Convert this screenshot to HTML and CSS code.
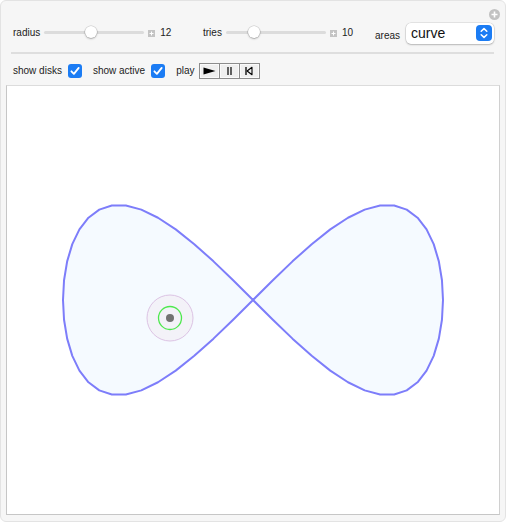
FILE: index.html
```html
<!DOCTYPE html>
<html lang="en">
<head>
<meta charset="utf-8">
<title>Curve areas</title>
<link rel="stylesheet" href="styles.css">
</head>
<body>
<div class="panel">
  <button class="add-btn" aria-label="more">
    <svg width="11" height="11" viewBox="0 0 11 11"><circle cx="5.5" cy="5.5" r="5.5" fill="#c2c2c2"/><path d="M5.5 2.5v6M2.5 5.5h6" stroke="#fff" stroke-width="1.6"/></svg>
  </button>

  <div class="row row-top">
    <div class="group g-radius">
      <span class="label">radius</span>
      <div class="slider"><div class="track"></div><div class="thumb" style="left:41px"></div></div>
      <span class="step"><svg width="7" height="7" viewBox="0 0 7 7"><rect width="7" height="7" fill="#c4c4c4"/><path d="M3.5 1.5v4M1.5 3.5h4" stroke="#fff" stroke-width="1"/></svg></span>
      <span class="value">12</span>
    </div>
    <div class="group g-tries">
      <span class="label">tries</span>
      <div class="slider"><div class="track"></div><div class="thumb" style="left:22px"></div></div>
      <span class="step"><svg width="7" height="7" viewBox="0 0 7 7"><rect width="7" height="7" fill="#c4c4c4"/><path d="M3.5 1.5v4M1.5 3.5h4" stroke="#fff" stroke-width="1"/></svg></span>
      <span class="value">10</span>
    </div>
    <div class="group g-areas">
      <span class="label label-low">areas</span>
      <div class="select">
        <span class="select-text">curve</span>
        <span class="stepper"><svg width="16" height="16" viewBox="0 0 16 16"><path d="M5.2 6.3L8 3.6l2.8 2.7M5.2 9.7L8 12.4l2.8-2.7" fill="none" stroke="#fff" stroke-width="1.5" stroke-linecap="round" stroke-linejoin="round"/></svg></span>
      </div>
    </div>
  </div>

  <div class="sep"></div>

  <div class="row row-bottom">
    <span class="label">show disks</span>
    <span class="check"><svg width="14" height="14" viewBox="0 0 14 14"><path d="M3.4 7.3l2.5 2.6 4.8-6" fill="none" stroke="#fff" stroke-width="1.8" stroke-linecap="round" stroke-linejoin="round"/></svg></span>
    <span class="label gap-l">show active</span>
    <span class="check"><svg width="14" height="14" viewBox="0 0 14 14"><path d="M3.4 7.3l2.5 2.6 4.8-6" fill="none" stroke="#fff" stroke-width="1.8" stroke-linecap="round" stroke-linejoin="round"/></svg></span>
    <span class="label gap-l">play</span>
    <div class="player">
      <span class="pbtn"><svg width="19" height="14" viewBox="0 0 19 14"><path d="M3.5 3.5L15.5 7 3.5 10.5z" fill="#000"/></svg></span>
      <span class="pbtn"><svg width="19" height="14" viewBox="0 0 19 14"><path d="M8 3v8M11 3v8" stroke="#000" stroke-width="1.2"/></svg></span>
      <span class="pbtn"><svg width="19" height="14" viewBox="0 0 19 14"><path d="M6 3v8" stroke="#000" stroke-width="1.3"/><path d="M12 3.3L7.1 7l4.9 3.7z" fill="none" stroke="#000" stroke-width="1.1" stroke-linejoin="round"/></svg></span>
    </div>
  </div>

  <div class="plot">
    <svg class="plot-svg" width="492" height="428" viewBox="7 86 492 428">
      <polygon class="curve" points=""/>
      <circle cx="170" cy="318" r="23" fill="#f3f2f8" stroke="#dcc3e4" stroke-width="1"/>
      <circle cx="170" cy="318" r="11.5" fill="none" stroke="#4de84d" stroke-width="1.3"/>
      <circle cx="170" cy="318" r="4" fill="#727272"/>
    </svg>
  </div>
</div>
<script src="script.js"></script>
</body>
</html>
```

FILE: styles.css
```css
html, body {
  margin: 0;
  padding: 0;
  background: #ffffff;
}

body {
  font-family: "Liberation Sans", Arial, sans-serif;
  color: #222;
}

.panel {
  box-sizing: border-box;
  width: 506px;
  height: 522px;
  border: 1px solid #e3e3e3;
  border-radius: 6px;
  background: #f6f6f6;
  position: relative;
}

.add-btn {
  position: absolute;
  top: 8px;
  right: 5px;
  width: 11px;
  height: 11px;
  padding: 0;
  border: 0;
  background: none;
  line-height: 0;
}

.row {
  display: flex;
  align-items: center;
}

.row-top {
  height: 22px;
  margin: 21px 0 0 12px;
}

.group {
  display: flex;
  align-items: center;
}

.g-radius { width: 190px; }
.g-tries { width: 172px; }

.label {
  font-size: 10px;
  line-height: 12px;
  color: #222;
  white-space: nowrap;
}

.label-low {
  margin-top: 6px;
}

.slider {
  position: relative;
  width: 100px;
  height: 12px;
  margin-left: 4px;
  margin-top: -2px;
}

.track {
  position: absolute;
  left: 0;
  right: 0;
  top: 4.5px;
  height: 3px;
  border-radius: 2px;
  background: #dcdcdc;
}

.thumb {
  position: absolute;
  top: 0;
  width: 12px;
  height: 12px;
  box-sizing: border-box;
  border-radius: 50%;
  background: #fff;
  box-shadow: 0 0 0 0.5px rgba(0, 0, 0, 0.18), 0 1px 2px rgba(0, 0, 0, 0.25);
}

.step {
  margin-left: 4px;
  line-height: 0;
}

.value {
  margin-left: 5px;
  font-size: 10px;
  line-height: 12px;
}

.select {
  margin-left: 6px;
  width: 88px;
  height: 21px;
  box-sizing: border-box;
  background: #fff;
  border-radius: 5px;
  box-shadow: 0 0 0 0.5px rgba(0, 0, 0, 0.14), 0 1px 2px rgba(0, 0, 0, 0.2);
  display: flex;
  align-items: center;
  justify-content: space-between;
  padding: 0 2px 0 5px;
}

.select-text {
  font-size: 14px;
  color: #111;
}

.stepper {
  width: 16px;
  height: 16px;
  border-radius: 4px;
  background: #1b7cf4;
  line-height: 0;
}

.sep {
  height: 2px;
  background: #dedede;
  margin: 8px 11px 0 10px;
}

.row-bottom {
  height: 16px;
  margin: 9px 0 0 12px;
}

.check {
  width: 14px;
  height: 14px;
  margin-left: 6px;
  border-radius: 3px;
  background: #1b7cf4;
  line-height: 0;
}

.gap-l {
  margin-left: 11px;
}

.player {
  display: flex;
  margin-left: 4px;
  border: 1px solid #8c8c8c;
}

.pbtn {
  width: 19px;
  height: 14px;
  background: #efefef;
  box-shadow: inset 0 0 0 1px #fafafa;
  line-height: 0;
}

.pbtn + .pbtn {
  border-left: 1px solid #8c8c8c;
}

.plot {
  margin: 6px 0 0 5px;
  width: 494px;
  height: 430px;
  box-sizing: border-box;
  background: #fff;
  border: 1px solid #c6c6c6;
  border-top-color: #dcdcdc;
  border-right-color: #d0d0d0;
  line-height: 0;
}

.plot-svg {
  display: block;
}

.curve {
  fill: #f5faff;
  stroke: #7d7dfa;
  stroke-width: 2;
  stroke-linejoin: round;
}
```

FILE: script.js
```js
// Lemniscate of Gerono sampled as a closed polygon:
// x = cx + a cos t, y = cy - a sin t cos t
(function () {
  var cx = 253, cy = 300, a = 190, n = 60;
  var pts = [];
  for (var i = 0; i < n; i++) {
    var t = (2 * Math.PI * i) / n;
    var x = cx + a * Math.cos(t);
    var y = cy - a * Math.sin(t) * Math.cos(t);
    pts.push(x.toFixed(2) + "," + y.toFixed(2));
  }
  document.querySelector(".curve").setAttribute("points", pts.join(" "));
})();
```
